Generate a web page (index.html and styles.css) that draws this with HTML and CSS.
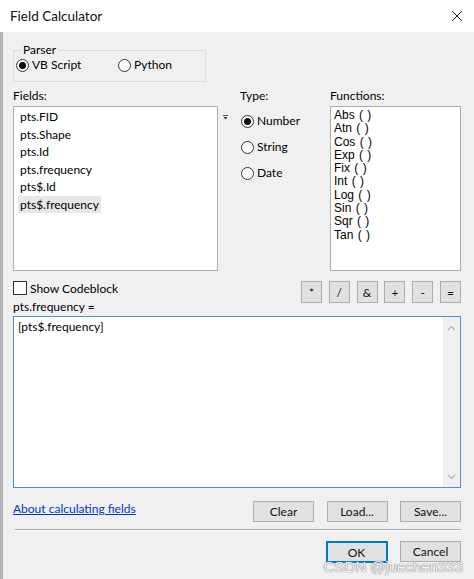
FILE: index.html
```html
<!DOCTYPE html>
<html lang="en">
<head>
    <meta charset="UTF-8">
    <title>Field Calculator</title>
    <link rel="stylesheet" href="styles.css">
</head>
<body>
    <div class="window">
        <div class="titlebar">
            <span class="title">Field Calculator</span>
            <svg class="close" width="12" height="12" viewBox="0 0 12 12">
                <path d="M1 1 L11 11 M11 1 L1 11" stroke="#222" stroke-width="1" fill="none"/>
            </svg>
        </div>

        <div class="dialog">
            <fieldset class="parser">
                <legend>Parser</legend>
                <label class="radio vb"><span class="dot checked"></span>VB Script</label>
                <label class="radio"><span class="dot"></span>Python</label>
            </fieldset>

            <div class="top">
                <div class="col">
                    <div class="caption">Fields:</div>
                    <ul class="listbox field-list">
                        <li>pts.FID</li>
                        <li>pts.Shape</li>
                        <li>pts.Id</li>
                        <li>pts.frequency</li>
                        <li>pts$.Id</li>
                        <li class="selected">pts$.frequency</li>
                    </ul>
                </div>

                <div class="sort-mark">
                    <svg width="5" height="5" viewBox="0 0 5 5">
                        <path d="M0 0.5 H5" stroke="#555" stroke-width="1"/>
                        <path d="M0.5 2 H4.5 L2.5 4.5 Z" fill="#333"/>
                    </svg>
                </div>

                <div class="col">
                    <div class="caption">Type:</div>
                    <div class="type-list">
                        <label class="radio"><span class="dot checked"></span>Number</label>
                        <label class="radio"><span class="dot"></span>String</label>
                        <label class="radio"><span class="dot"></span>Date</label>
                    </div>
                </div>

                <div class="col">
                    <div class="caption">Functions:</div>
                    <ul class="listbox func-list">
                        <li>Abs ( )</li>
                        <li>Atn ( )</li>
                        <li>Cos ( )</li>
                        <li>Exp ( )</li>
                        <li>Fix ( )</li>
                        <li>Int ( )</li>
                        <li>Log ( )</li>
                        <li>Sin ( )</li>
                        <li>Sqr ( )</li>
                        <li>Tan ( )</li>
                    </ul>
                </div>
            </div>

            <div class="code-row">
                <div class="code-left">
                    <label class="check"><span class="box"></span>Show Codeblock</label>
                    <div class="expr-label">pts.frequency =</div>
                </div>
                <div class="ops">
                    <button class="op">*</button>
                    <button class="op">/</button>
                    <button class="op">&amp;</button>
                    <button class="op">+</button>
                    <button class="op">-</button>
                    <button class="op">=</button>
                </div>
            </div>

            <div class="expr">
                <div class="expr-text">[pts$.frequency]</div>
                <div class="scrollbar">
                    <svg width="9" height="6" viewBox="0 0 9 6"><path d="M1 5 L4.5 1.5 L8 5" stroke="#b4b4b4" stroke-width="1.2" fill="none"/></svg>
                    <svg width="9" height="6" viewBox="0 0 9 6"><path d="M1 1 L4.5 4.5 L8 1" stroke="#b4b4b4" stroke-width="1.2" fill="none"/></svg>
                </div>
            </div>

            <div class="actions">
                <a href="#" class="help">About calculating fields</a>
                <div class="btns">
                    <button class="btn">Clear</button>
                    <button class="btn">Load...</button>
                    <button class="btn">Save...</button>
                </div>
            </div>

            <div class="sep"></div>

            <div class="confirm">
                <button class="btn default">OK</button>
                <button class="btn">Cancel</button>
            </div>
        </div>

        <div class="watermark">CSDN @juechen333</div>
    </div>
</body>
</html>
```

FILE: styles.css
```css
* {
    box-sizing: border-box;
}

body {
    margin: 0;
    font-family: 'Lato', 'Liberation Sans', sans-serif;
    font-size: 12px;
    color: #000;
    background-color: #f0f0f0;
}

.window {
    position: relative;
    height: 579px;
    overflow: hidden;
}

.titlebar {
    height: 32px;
    background-color: #fff;
    display: flex;
    align-items: center;
    justify-content: space-between;
    padding: 0 11px 0 10px;
}

.title {
    font-size: 13.5px;
    color: #111;
}

.dialog {
    border-left: 3px solid #b4b4b4;
    padding: 11px 13px 0 10px;
    height: 547px;
}

/* parser group */
.parser {
    width: 193px;
    min-width: 0;
    margin: 0;
    padding: 0 3px 8px 2px;
    border: 1px solid #dcdcdc;
    display: flex;
}

.parser legend {
    margin-left: 5px;
    padding: 0 2px;
    line-height: 14px;
}

.radio {
    display: flex;
    align-items: center;
    gap: 3px;
    height: 16px;
    line-height: 16px;
}

.parser .vb {
    width: 102px;
}

.dot {
    width: 13px;
    height: 13px;
    border: 1px solid #333;
    border-radius: 50%;
    background-color: #fff;
    display: flex;
    align-items: center;
    justify-content: center;
}

.dot.checked::after {
    content: "";
    width: 7px;
    height: 7px;
    border-radius: 50%;
    background-color: #111;
}

/* fields / type / functions */
.top {
    display: grid;
    grid-template-columns: 205px 22px 90px 131px;
    margin-top: 7px;
}

.caption {
    line-height: 14px;
    margin-bottom: 3px;
}

.listbox {
    list-style: none;
    margin: 0;
    height: 165px;
    border: 1px solid #adadad;
    background-color: #fff;
}

.field-list {
    padding: 1px 0 0 4px;
}

.field-list li {
    width: fit-content;
    line-height: 17.5px;
    padding: 0 2px;
}

.field-list li.selected {
    background-color: #e8e8e8;
}

.func-list {
    padding: 2px 0 0 3px;
    font-family: 'Liberation Sans', Arial, sans-serif;
    font-size: 12px;
}

.func-list li {
    line-height: 13.3px;
    word-spacing: 1px;
}

.sort-mark {
    padding: 19px 0 0 5px;
}

.type-list {
    display: flex;
    flex-direction: column;
    gap: 10px;
    padding: 7px 0 0 1px;
}

/* codeblock row */
.code-row {
    display: flex;
    justify-content: space-between;
    margin-top: 10px;
}

.check {
    display: flex;
    align-items: center;
    gap: 3px;
    height: 14px;
}

.box {
    width: 14px;
    height: 14px;
    border: 1px solid #333;
    background-color: #fff;
}

.expr-label {
    margin-top: 5px;
    line-height: 14px;
}

.ops {
    width: 160px;
    display: flex;
    justify-content: space-between;
}

.op {
    width: 21px;
    height: 22px;
    padding: 0;
    font-family: inherit;
    font-size: 12px;
    background-color: #e1e1e1;
    border: 1px solid #adadad;
    color: #111;
}

/* expression box */
.expr {
    margin-top: 2px;
    height: 172px;
    border: 1px solid #4a90d9;
    background-color: #fff;
    display: flex;
    justify-content: space-between;
}

.expr-text {
    padding: 3px 0 0 4px;
    line-height: 14px;
}

.scrollbar {
    width: 17px;
    background-color: #f0f0f0;
    display: flex;
    flex-direction: column;
    justify-content: space-between;
    align-items: center;
    padding: 8px 0 7px;
}

/* buttons */
.actions {
    display: flex;
    justify-content: space-between;
    align-items: center;
    margin-top: 13px;
}

.help {
    color: #0033dd;
    text-decoration: underline;
    margin-top: -7px;
}

.btns, .confirm {
    display: flex;
    gap: 12.5px;
}

.btn {
    width: 61px;
    height: 21px;
    padding: 0;
    font-family: inherit;
    font-size: 12px;
    color: #111;
    background-color: #e1e1e1;
    border: 1px solid #adadad;
}

.btn.default {
    width: 62px;
    height: 22px;
    border: 2px solid #0078d7;
}

.sep {
    margin: 7px 0 0 2px;
    border-top: 1px solid #a8a8a8;
    border-bottom: 1px solid #fff;
}

.confirm {
    justify-content: flex-end;
    margin-top: 10px;
}

.watermark {
    position: absolute;
    right: 11px;
    bottom: 4px;
    font-family: 'Liberation Sans', Arial, sans-serif;
    font-size: 15px;
    color: #f4f4f4;
    text-shadow: 0 0 1px #777, 0 0 1px #777;
}
```
